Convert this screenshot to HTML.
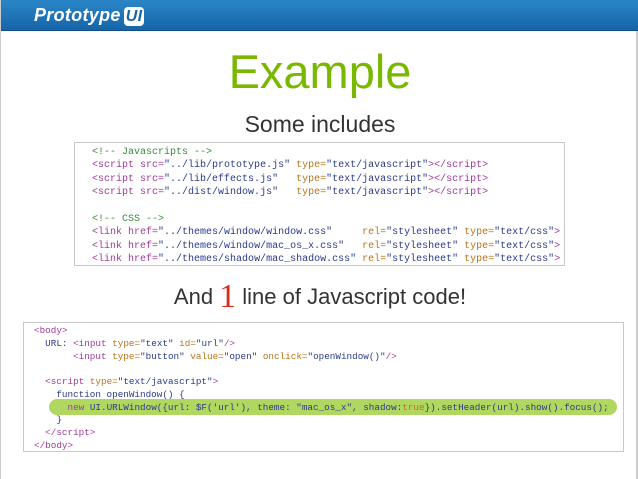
<!DOCTYPE html>
<html><head><meta charset="utf-8"><style>
*{margin:0;padding:0;box-sizing:border-box}
body{width:638px;height:479px;background:#fff;position:relative;overflow:hidden;font-family:"Liberation Sans",sans-serif;border-left:1px solid #ccc;border-right:2px solid #ccc}
.hdr{position:absolute;left:0;top:0;width:638px;height:31px;background:linear-gradient(#2a86c8,#1565a8);border-bottom:1px solid #0d4f88}
.logo{position:absolute;left:33px;top:5px;color:#fff;font-style:italic;font-weight:bold;font-size:18px;letter-spacing:0.3px}
.ui{display:inline-block;background:#fff;color:#1565a8;border-radius:4px;padding:0 2px;font-size:16px;line-height:19px;margin-left:3px;font-style:italic}
.t{position:absolute;left:0;width:638px;text-align:center}
pre{font-family:"Liberation Mono",monospace;position:absolute;border:1px solid #c8c8c8;white-space:pre}
.c{color:#3a8a3a}.tg{color:#a03a9a}.a{color:#b8741a}.s{color:#2a3a8a}.k{color:#2a3a8a}
</style></head><body>
<div class="hdr"><div class="logo">Prototype<span class="ui">UI</span></div></div>
<div class="t" style="top:44px;font-size:47px;color:#7ab800;line-height:56px;left:0">Example</div>
<div class="t" style="top:110px;font-size:23px;color:#333;line-height:28px;left:0">Some includes</div>
<pre style="left:73px;top:142px;width:491px;height:124px;padding:3px 0 0 17px;font-size:10px;line-height:13.4px;background:#fff"><span class="c">&lt;!-- Javascripts --&gt;</span>
<span class="tg">&lt;script</span> <span class="tg">src=</span><span class="s">"../lib/prototype.js"</span> <span class="a">type=</span><span class="s">"text/javascript"</span><span class="tg">&gt;&lt;/script&gt;</span>
<span class="tg">&lt;script</span> <span class="tg">src=</span><span class="s">"../lib/effects.js"</span>   <span class="a">type=</span><span class="s">"text/javascript"</span><span class="tg">&gt;&lt;/script&gt;</span>
<span class="tg">&lt;script</span> <span class="tg">src=</span><span class="s">"../dist/window.js"</span>   <span class="a">type=</span><span class="s">"text/javascript"</span><span class="tg">&gt;&lt;/script&gt;</span>

<span class="c">&lt;!-- CSS --&gt;</span>
<span class="tg">&lt;link</span> <span class="tg">href=</span><span class="s">"../themes/window/window.css"</span>     <span class="a">rel=</span><span class="s">"stylesheet"</span> <span class="a">type=</span><span class="s">"text/css"</span><span class="tg">&gt;</span>
<span class="tg">&lt;link</span> <span class="tg">href=</span><span class="s">"../themes/window/mac_os_x.css"</span>   <span class="a">rel=</span><span class="s">"stylesheet"</span> <span class="a">type=</span><span class="s">"text/css"</span><span class="tg">&gt;</span>
<span class="tg">&lt;link</span> <span class="tg">href=</span><span class="s">"../themes/shadow/mac_shadow.css"</span> <span class="a">rel=</span><span class="s">"stylesheet"</span> <span class="a">type=</span><span class="s">"text/css"</span><span class="tg">&gt;</span></pre>
<div class="t" style="top:280px;font-size:22px;color:#333;line-height:34px">And <span style="font-family:'Liberation Serif',serif;color:#e02a1a;font-size:34px;vertical-align:-3px">1</span> line of Javascript code!</div>
<div style="position:absolute;left:48px;top:399px;width:568px;height:16px;background:#b0d860;border-radius:8px"></div>
<pre style="left:22px;top:322px;width:601px;height:130px;padding:2px 0 0 10px;font-size:9.3px;line-height:12.75px;background:transparent"><span class="tg">&lt;body&gt;</span>
  <span class="k">URL:</span> <span class="tg">&lt;input</span> <span class="a">type=</span><span class="s">"text"</span> <span class="a">id=</span><span class="s">"url"</span><span class="tg">/&gt;</span>
       <span class="tg">&lt;input</span> <span class="a">type=</span><span class="s">"button"</span> <span class="a">value=</span><span class="s">"open"</span> <span class="a">onclick=</span><span class="s">"openWindow()"</span><span class="tg">/&gt;</span>

  <span class="tg">&lt;script</span> <span class="a">type=</span><span class="s">"text/javascript"</span><span class="tg">&gt;</span>
    <span class="k">function openWindow() {</span>
      <span class="tg">new</span> <span class="k">UI.URLWindow({url: $F('url'), theme: "mac_os_x", shadow:</span><span class="a">true</span><span class="k">}).setHeader(url).show().focus();</span>
    <span class="k">}</span>
  <span class="tg">&lt;/script&gt;</span>
<span class="tg">&lt;/body&gt;</span></pre>
</body></html>
